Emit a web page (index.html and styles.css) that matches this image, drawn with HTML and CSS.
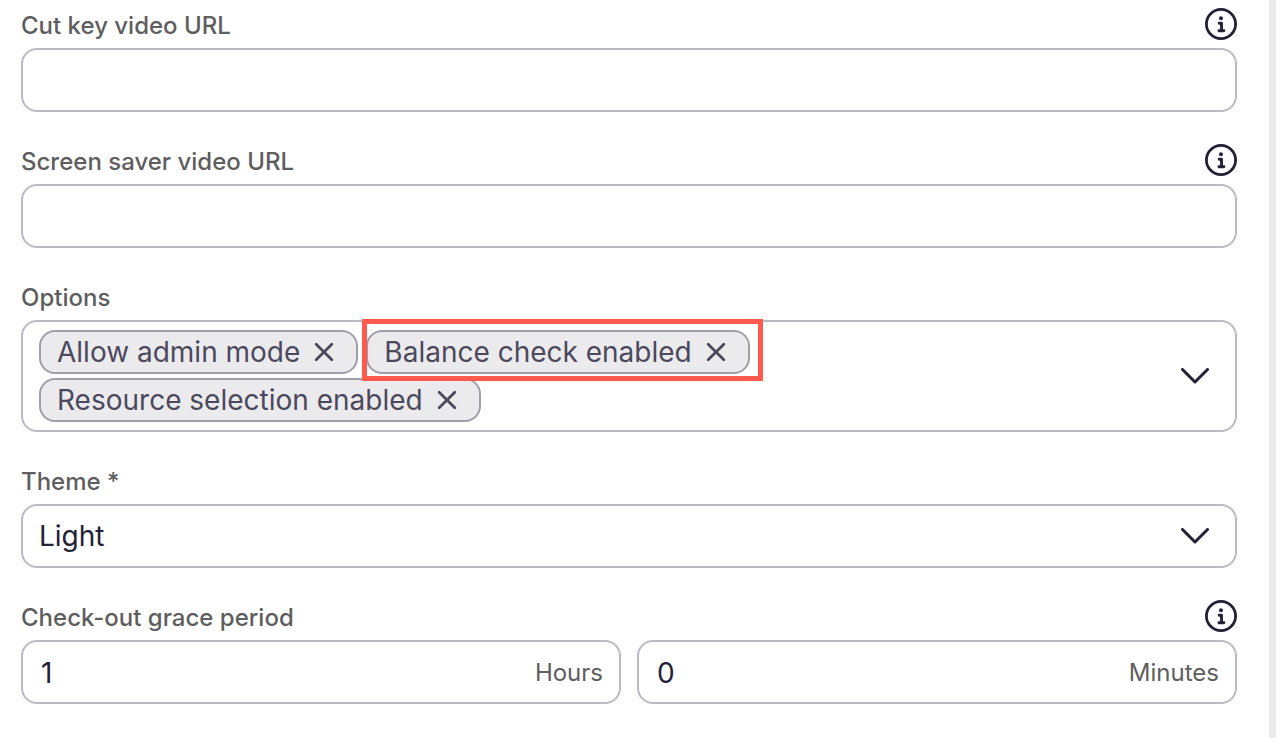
FILE: index.html
```html
<!DOCTYPE html>
<html lang="en">
<head>
    <meta charset="UTF-8">
    <meta name="viewport" content="width=device-width, initial-scale=1.0">
    <title>Kiosk settings</title>
    <link rel="stylesheet" href="styles.css">
</head>
<body>
    <!-- Shared icons -->
    <svg class="sprite" aria-hidden="true">
        <symbol id="icon-info" viewBox="0 0 32 32">
            <circle cx="16" cy="16" r="14.6" fill="none" stroke="currentColor" stroke-width="2.8"/>
            <circle cx="16" cy="10.2" r="2" fill="currentColor"/>
            <path d="M14.2 15.3h2.3v7.5M13.9 22.8h5" fill="none" stroke="currentColor" stroke-width="2.9" stroke-linecap="round" stroke-linejoin="round"/>
        </symbol>
        <symbol id="icon-close" viewBox="0 0 20 20">
            <path d="M2.2 2.2l15.6 15.6M17.8 2.2L2.2 17.8" fill="none" stroke="currentColor" stroke-width="2.8" stroke-linecap="round"/>
        </symbol>
        <symbol id="icon-chevron" viewBox="0 0 28 16">
            <path d="M1.5 1.5L14 14 26.5 1.5" fill="none" stroke="currentColor" stroke-width="3" stroke-linecap="round" stroke-linejoin="round"/>
        </symbol>
    </svg>

    <form class="settings">
        <div class="field">
            <div class="field-header">
                <label for="cut-key-url">Cut key video URL</label>
                <button type="button" class="icon-btn" aria-label="About cut key video URL"><svg class="info"><use href="#icon-info"/></svg></button>
            </div>
            <input type="text" class="control" id="cut-key-url">
        </div>

        <div class="field">
            <div class="field-header">
                <label for="screen-saver-url">Screen saver video URL</label>
                <button type="button" class="icon-btn" aria-label="About screen saver video URL"><svg class="info"><use href="#icon-info"/></svg></button>
            </div>
            <input type="text" class="control" id="screen-saver-url">
        </div>

        <div class="field">
            <div class="field-header">
                <label for="options">Options</label>
            </div>
            <div class="multi-select">
                <div class="chips">
                    <span class="chip">Allow admin mode <button type="button" class="icon-btn" aria-label="Remove Allow admin mode"><svg class="close"><use href="#icon-close"/></svg></button></span>
                    <span class="chip highlighted">Balance check enabled <button type="button" class="icon-btn" aria-label="Remove Balance check enabled"><svg class="close"><use href="#icon-close"/></svg></button></span>
                    <span class="chip">Resource selection enabled <button type="button" class="icon-btn" aria-label="Remove Resource selection enabled"><svg class="close"><use href="#icon-close"/></svg></button></span>
                </div>
                <button type="button" class="icon-btn" id="options" aria-haspopup="listbox"><svg class="chevron"><use href="#icon-chevron"/></svg></button>
            </div>
        </div>

        <div class="field">
            <div class="field-header">
                <label for="theme">Theme *</label>
            </div>
            <div class="select-wrap">
                <select class="control" id="theme" required>
                    <option selected>Light</option>
                    <option>Dark</option>
                </select>
                <svg class="chevron"><use href="#icon-chevron"/></svg>
            </div>
        </div>

        <div class="field">
            <div class="field-header">
                <label for="grace-hours">Check-out grace period</label>
                <button type="button" class="icon-btn" aria-label="About check-out grace period"><svg class="info"><use href="#icon-info"/></svg></button>
            </div>
            <div class="duration">
                <div class="control unit-box">
                    <input type="text" inputmode="numeric" id="grace-hours" value="1">
                    <label for="grace-hours">Hours</label>
                </div>
                <div class="control unit-box">
                    <input type="text" inputmode="numeric" id="grace-minutes" value="0">
                    <label for="grace-minutes">Minutes</label>
                </div>
            </div>
        </div>
    </form>
</body>
</html>
```
FILE: styles.css
```css
/* Base styling */
* {
    box-sizing: border-box;
}
body {
    margin: 0;
    min-height: 100vh;
    background-color: #ebebed;
    color: #232135;
    font-family: Inter, "Liberation Sans", sans-serif;
    font-optical-sizing: none;
    padding-right: 7px;
}
.sprite {
    position: absolute;
    width: 0;
    height: 0;
}
.settings {
    display: flex;
    flex-direction: column;
    gap: 32px;
    min-height: 100vh;
    padding: 8px 32px 32px 21px;
    background-color: #fff;
}

/* Fields */
.field {
    display: flex;
    flex-direction: column;
    gap: 8px;
}
.field-header {
    display: flex;
    justify-content: space-between;
    align-items: center;
    height: 32px;
    padding-top: 2px;
    color: #5e5e5e;
    font-size: 24px;
    font-weight: 500;
}
.field-header .icon-btn {
    margin-top: -2px;
}
.control {
    width: 100%;
    height: 64px;
    padding: 0 16px;
    border: 2px solid #bbbac1;
    border-radius: 16px;
    background-color: #fff;
    color: #232135;
    font: inherit;
    font-size: 28px;
}
.icon-btn {
    display: flex;
    padding: 0;
    border: none;
    background: none;
    color: inherit;
    cursor: pointer;
}
.info {
    width: 32px;
    height: 32px;
    color: #232135;
}
.chevron {
    width: 28px;
    height: 16px;
    color: #232135;
}
.close {
    width: 20px;
    height: 20px;
}

/* Options */
.multi-select {
    display: flex;
    align-items: center;
    justify-content: space-between;
    padding: 8px 26px 8px 16px;
    border: 2px solid #bbbac1;
    border-radius: 16px;
}
.chips {
    display: flex;
    flex-wrap: wrap;
    gap: 4px 8px;
    max-width: 800px;
}
.chip {
    position: relative;
    display: flex;
    align-items: center;
    gap: 14px;
    height: 44px;
    padding: 0 22px 0 16px;
    border: 2px solid #a09fa9;
    border-radius: 16px;
    background-color: #ebebed;
    color: #4c495d;
    font-size: 28px;
}
.highlighted {
    z-index: 1;
}
.highlighted::after {
    content: "";
    position: absolute;
    top: -13px;
    right: -15px;
    bottom: -9px;
    left: -6px;
    border: 5px solid #ff5a4d;
    pointer-events: none;
}

/* Theme */
.select-wrap {
    display: grid;
    align-items: center;
}
.select-wrap > * {
    grid-area: 1 / 1;
}
.select-wrap select {
    appearance: none;
}
.select-wrap .chevron {
    justify-self: end;
    margin-right: 28px;
    pointer-events: none;
}

/* Grace period */
.duration {
    display: flex;
    gap: 16px;
}
.unit-box {
    display: flex;
    align-items: center;
}
.unit-box input {
    flex: 1;
    min-width: 0;
    padding: 2px 2px 0;
    border: none;
    outline: none;
    color: inherit;
    font: inherit;
}
.unit-box label {
    color: #5e5e5e;
    font-size: 24px;
}
```
